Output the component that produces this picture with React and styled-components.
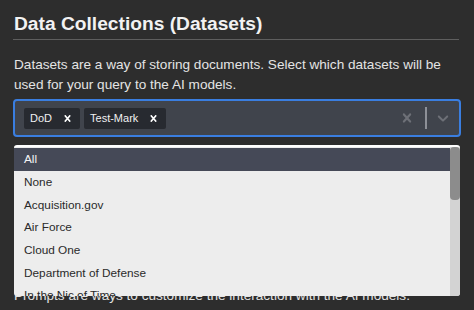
import styled, { createGlobalStyle } from "styled-components";

const GlobalStyle = createGlobalStyle`
  html, body {
    margin: 0;
    padding: 0;
    background: #2d2d2d;
    overflow: hidden;
  }
  body {
    font-family: "Liberation Sans", Arial, sans-serif;
    color: #e6e6e6;
  }
`;

const Page = styled.div`
  width: 474px;
  height: 310px;
  padding: 0 13px;
  box-sizing: border-box;
  overflow: hidden;
`;

const Title = styled.h2`
  margin: 0 2px 0 0;
  padding: 13px 1px 4px;
  font-size: 19.2px;
  line-height: 22px;
  font-weight: 700;
  color: #f2f2f2;
  border-bottom: 1px solid #5e5e5e;
`;

const Text = styled.p`
  margin: 15px 1px 0;
  font-size: 13.6px;
  line-height: 19.5px;
  color: #e4e4e4;
`;

const SelectWrap = styled.div`
  position: relative;
  margin-top: 5px;
`;

// the control box with the chosen tags
const Control = styled.div`
  height: 38px;
  box-sizing: border-box;
  border: 2px solid #3a7ee0;
  border-radius: 4px;
  background: #40444c;
  display: flex;
  align-items: center;
  padding: 0 0 0 9px;
`;

const Tags = styled.div`
  flex: 1;
  display: flex;
  gap: 4px;
`;

const Tag = styled.div`
  height: 21px;
  display: flex;
  align-items: center;
  background: #272a30;
  border-radius: 2px;
  color: #f0f0f0;
  font-size: 11px;
  padding-left: 6px;
`;

const TagRemove = styled.span`
  display: flex;
  align-items: center;
  padding: 0 6px 0 9px;
  color: #ffffff;
`;

const Indicator = styled.div`
  width: ${(p) => p.$w || 36}px;
  height: 34px;
  display: flex;
  align-items: center;
  justify-content: center;
  color: #6d7077;
`;

const Separator = styled.span`
  width: 2px;
  height: 22px;
  background: #8d9097;
`;

const Menu = styled.div`
  position: absolute;
  z-index: 2;
  top: 46px;
  left: 1px;
  right: 1px;
  height: 151px;
  box-sizing: border-box;
  background: #ededed;
  border-top: 2px solid #ffffff;
  border-radius: 3px;
  display: flex;
  overflow: hidden;
`;

const Options = styled.div`
  flex: 1;
  padding-top: 1px;
`;

const Option = styled.div`
  height: 22.7px;
  display: flex;
  align-items: center;
  padding-left: 10px;
  font-size: 11.8px;
  color: ${(p) => (p.$active ? "#f4f4f4" : "#2a2a2a")};
  background: ${(p) => (p.$active ? "#454957" : "transparent")};
  white-space: nowrap;
`;

const Track = styled.div`
  width: 10px;
  background: #d3d3d3;
  display: flex;
  flex-direction: column;
`;

const Thumb = styled.div`
  height: 53px;
  background: #8c8c8c;
  border-radius: 4px;
`;

const Below = styled.p`
  margin: 149px 1px 0;
  font-size: 13.6px;
  line-height: 19.5px;
  color: #e4e4e4;
  white-space: nowrap;
`;

const Cross = ({ size = 14 }) => (
  <svg width={size} height={size} viewBox="0 0 20 20" fill="currentColor">
    <path d="M14.348 14.849c-0.469 0.469-1.229 0.469-1.697 0l-2.651-3.030-2.651 3.029c-0.469 0.469-1.229 0.469-1.697 0-0.469-0.469-0.469-1.229 0-1.697l2.758-3.15-2.759-3.152c-0.469-0.469-0.469-1.228 0-1.697s1.228-0.469 1.697 0l2.652 3.031 2.651-3.031c0.469-0.469 1.228-0.469 1.697 0s0.469 1.229 0 1.697l-2.758 3.152 2.758 3.15c0.469 0.469 0.469 1.229 0 1.698z" />
  </svg>
);

const Chevron = () => (
  <svg width="18" height="18" viewBox="0 0 20 20" fill="currentColor">
    <path d="M4.516 7.548c0.436-0.446 1.043-0.481 1.576 0l3.908 3.747 3.908-3.747c0.533-0.481 1.141-0.446 1.574 0 0.436 0.445 0.408 1.197 0 1.615-0.406 0.418-4.695 4.502-4.695 4.502-0.217 0.223-0.502 0.335-0.787 0.335s-0.57-0.112-0.789-0.335c0 0-4.287-4.084-4.695-4.502s-0.436-1.170 0-1.615z" />
  </svg>
);

const options = [
  "All",
  "None",
  "Acquisition.gov",
  "Air Force",
  "Cloud One",
  "Department of Defense",
  "In the Nic of Time",
];

function App() {
  return (
    <Page>
      <GlobalStyle />
      <Title>Data Collections (Datasets)</Title>
      <Text>
        Datasets are a way of storing documents. Select which datasets will be
        used for your query to the AI models.
      </Text>
      <SelectWrap>
        <Control>
          <Tags>
            <Tag>
              DoD
              <TagRemove>
                <Cross size={13} />
              </TagRemove>
            </Tag>
            <Tag>
              Test-Mark
              <TagRemove>
                <Cross size={13} />
              </TagRemove>
            </Tag>
          </Tags>
          <Indicator>
            <Cross size={18} />
          </Indicator>
          <Separator />
          <Indicator $w={32}>
            <Chevron />
          </Indicator>
        </Control>
        <Menu>
          <Options>
            {options.map((o, i) => (
              <Option key={o} $active={i === 0}>
                {o}
              </Option>
            ))}
          </Options>
          <Track>
            <Thumb />
          </Track>
        </Menu>
        <Below>
          Prompts are ways to customize the interaction with the AI models.
        </Below>
      </SelectWrap>
    </Page>
  );
}

export default App;
